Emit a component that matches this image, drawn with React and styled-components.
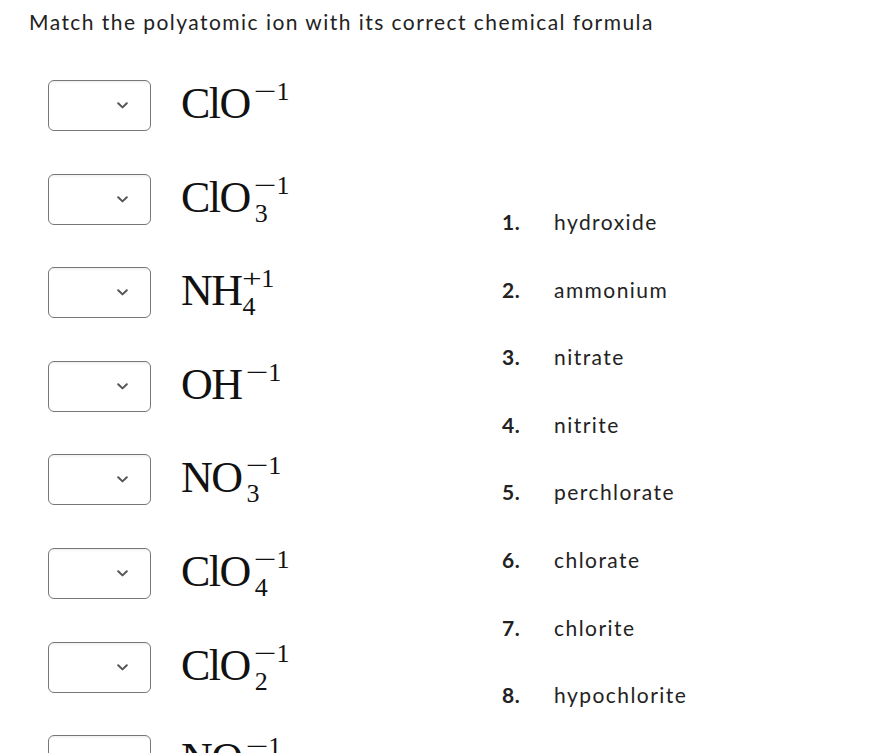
import React from "react";
import styled, { createGlobalStyle } from "styled-components";

const Global = createGlobalStyle`
  html, body { margin: 0; padding: 0; background: #fff; }
  body { font-family: Lato, "Noto Sans", sans-serif; color: #222; overflow: hidden; }
`;

const Page = styled.div`
  width: 873px;
  height: 753px;
  overflow: hidden;
  box-sizing: border-box;
  padding-top: 9px;
`;

const Title = styled.div`
  font-family: Lato, sans-serif;
  font-size: 21px;
  letter-spacing: 1.45px;
  line-height: 26px;
  padding-left: 29px;
  color: #222;
  white-space: nowrap;
`;

const Columns = styled.div`
  display: grid;
  grid-template-columns: 454px 1fr;
  padding-left: 48px;
  margin-top: 45px;
`;

const LeftCol = styled.div`
  display: flex;
  flex-direction: column;
`;

const Row = styled.div`
  display: flex;
  align-items: flex-start;
  height: 93.6px;
  flex: none;
`;

const Select = styled.div`
  width: 103px;
  height: 51px;
  box-sizing: border-box;
  border: 1px solid #777;
  border-radius: 6px;
  background: linear-gradient(#f0f0f0 0, #fff 3px);
  display: flex;
  align-items: center;
  justify-content: flex-end;
  padding-right: 22px;
  flex: none;
`;

const Formula = styled.div`
  margin-left: 30px;
  font-family: "Liberation Serif", "Times New Roman", serif;
  font-size: 44px;
  line-height: 51px;
  height: 51px;
  white-space: nowrap;
  color: #111;
  margin-top: -2px;
`;

const Base = styled.span`
  letter-spacing: -1.5px;
`;

const Scripts = styled.span`
  display: inline-flex;
  flex-direction: column;
  font-size: 26px;
  line-height: 26px;
  vertical-align: 18px;
  margin-left: ${(p) => p.$gap}px;
`;

const Sup = styled.span`
  display: block;
  white-space: nowrap;
`;

const Sub = styled.span`
  display: block;
  margin-top: 2px;
  margin-left: 1px;
`;

const Sign = styled.span`
  display: inline-block;
  transform: scaleX(${(p) => p.$scale});
  transform-origin: left center;
  margin-right: ${(p) => p.$after}px;
`;

const RightCol = styled.ol`
  list-style: none;
  margin: 108px 0 0 0;
  padding: 0;
`;

const Item = styled.li`
  display: flex;
  align-items: center;
  height: 67.55px;
  font-family: Lato, sans-serif;
  font-size: 21px;
  letter-spacing: 1.45px;
  color: #222;
  white-space: nowrap;
`;

const Num = styled.span`
  width: 52px;
  font-weight: 700;
  letter-spacing: 0.5px;
`;

const Chevron = () => (
  <svg width="11" height="7" viewBox="0 0 11 7" fill="none">
    <path d="M1.2 1.2 L5.5 5.4 L9.8 1.2" stroke="#555" strokeWidth="2" strokeLinecap="round" strokeLinejoin="round" />
  </svg>
);

const ions = [
  { base: "ClO", sign: "−", sub: null },
  { base: "ClO", sign: "−", sub: "3" },
  { base: "NH", sign: "+", sub: "4" },
  { base: "OH", sign: "−", sub: null },
  { base: "NO", sign: "−", sub: "3" },
  { base: "ClO", sign: "−", sub: "4" },
  { base: "ClO", sign: "−", sub: "2" },
  { base: "NO", sign: "−", sub: "2" },
];

const names = [
  "hydroxide",
  "ammonium",
  "nitrate",
  "nitrite",
  "perchlorate",
  "chlorate",
  "chlorite",
  "hypochlorite",
  "oxide",
];

export default function App() {
  return (
    <Page>
      <Global />
      <Title>Match the polyatomic ion with its correct chemical formula</Title>
      <Columns>
        <LeftCol>
          {ions.map((ion, i) => (
            <Row key={i}>
              <Select>
                <Chevron />
              </Select>
              <Formula>
                <Base>{ion.base}</Base>
                <Scripts $gap={ion.base === "NH" ? 0 : 4}>
                  <Sup>
                    {ion.sign === "−" ? (
                      <Sign $scale={1.55} $after={8}>−</Sign>
                    ) : (
                      <Sign $scale={1.35} $after={5}>+</Sign>
                    )}
                    1
                  </Sup>
                  {ion.sub && <Sub>{ion.sub}</Sub>}
                </Scripts>
              </Formula>
            </Row>
          ))}
        </LeftCol>
        <RightCol>
          {names.map((n, i) => (
            <Item key={n}>
              <Num>{i + 1}.</Num>
              <span>{n}</span>
            </Item>
          ))}
        </RightCol>
      </Columns>
    </Page>
  );
}
